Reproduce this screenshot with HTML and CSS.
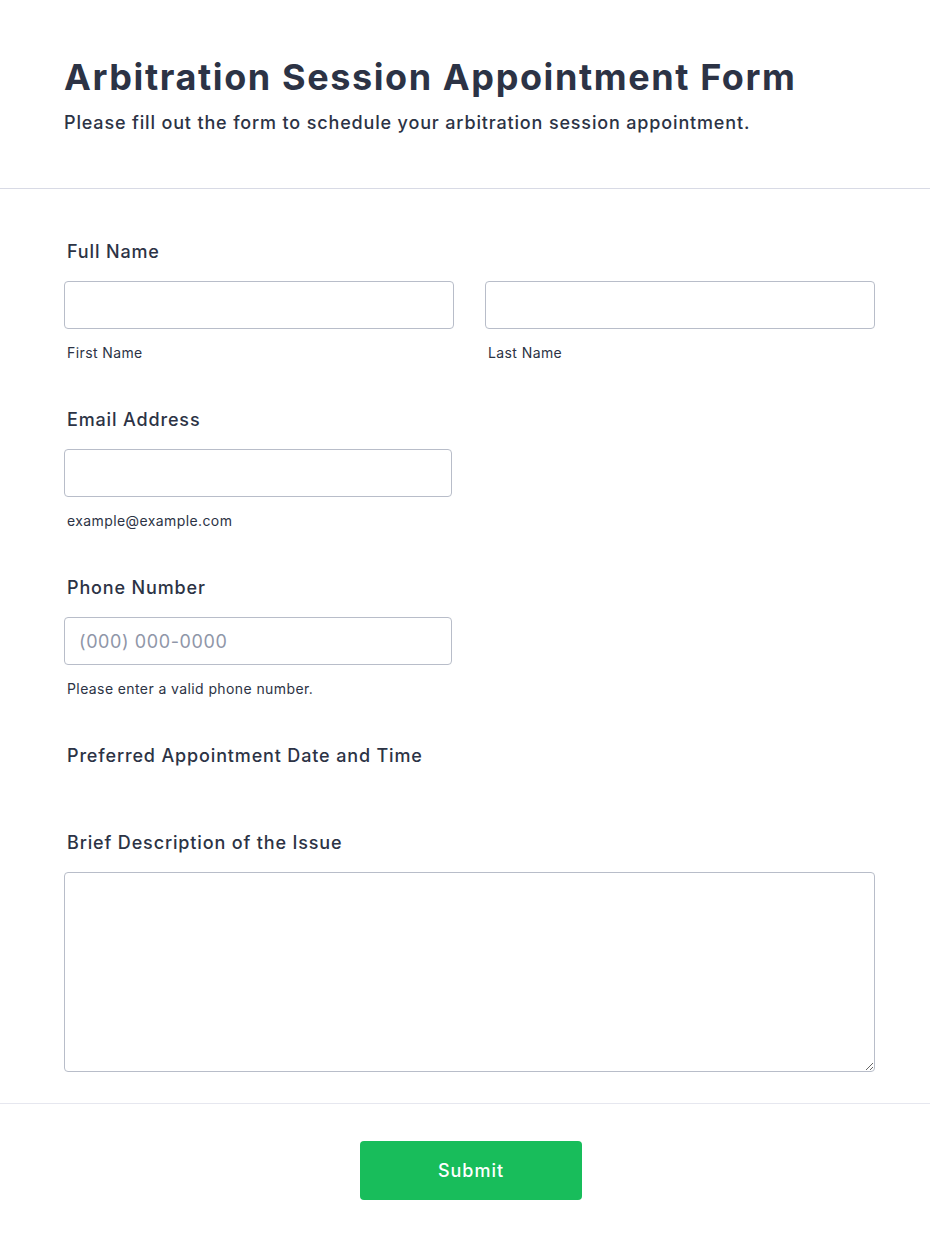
FILE: index.html
```html
<!DOCTYPE html>
<html>

<head>
    <meta charset="UTF-8">
    <title>Arbitration Session Appointment Form</title>
    <link rel="stylesheet" href="styles.css">
</head>

<body>
<div class="form-header">
    <h1>Arbitration Session Appointment Form</h1>
    <p>Please fill out the form to schedule your arbitration session appointment.</p>
</div>

<form class="form-body">
    <div class="field">
        <label class="field-label">Full Name</label>
        <div class="name-row">
            <div class="name-col">
                <input type="text" class="text-input">
                <span class="sublabel">First Name</span>
            </div>
            <div class="name-col">
                <input type="text" class="text-input">
                <span class="sublabel">Last Name</span>
            </div>
        </div>
    </div>

    <div class="field">
        <label class="field-label">Email Address</label>
        <div class="half">
            <input type="email" class="text-input">
            <span class="sublabel">example@example.com</span>
        </div>
    </div>

    <div class="field">
        <label class="field-label">Phone Number</label>
        <div class="half">
            <input type="tel" class="text-input" placeholder="(000) 000-0000">
            <span class="sublabel">Please enter a valid phone number.</span>
        </div>
    </div>

    <div class="field field-empty">
        <label class="field-label">Preferred Appointment Date and Time</label>
    </div>

    <div class="field field-last">
        <label class="field-label">Brief Description of the Issue</label>
        <textarea class="text-area"></textarea>
    </div>
</form>

<div class="form-footer">
    <button type="button" class="submit-button">Submit</button>
</div>
</body>
</html>
```

FILE: styles.css
```css
body {
    margin: 0;
    background-color: #fff;
    font-family: Inter, "Noto Sans", sans-serif;
    color: #2c3345;
}

.form-header {
    padding: 53px 64px 51px;
    border-bottom: 1px solid #d8dae5;
}

.form-header h1 {
    margin: 0;
    font-size: 36px;
    line-height: 48px;
    font-weight: 700;
    letter-spacing: 1.6px;
}

.form-header p {
    margin: 8px 0 0;
    font-size: 18px;
    line-height: 28px;
    font-weight: 500;
    letter-spacing: 0.84px;
}

.form-body {
    padding: 51px 55px 0 64px;
}

.field {
    margin-bottom: 45px;
}

.field-empty {
    margin-bottom: 63px;
}

.field-last {
    margin-bottom: 0;
}

.field-label {
    display: block;
    padding-left: 3px;
    font-size: 18px;
    line-height: 24px;
    font-weight: 500;
    letter-spacing: 0.85px;
    margin-bottom: 17px;
}

.name-row {
    display: flex;
    gap: 31px;
}

.name-col {
    flex: 1;
    display: flex;
    flex-direction: column;
}

.half {
    width: 388px;
    display: flex;
    flex-direction: column;
}

.text-input {
    box-sizing: border-box;
    width: 100%;
    height: 48px;
    padding: 0 14px;
    border: 1px solid #b8bdc9;
    border-radius: 4px;
    font-family: inherit;
    font-size: 18px;
    letter-spacing: 0.6px;
    color: #2c3345;
}

.text-input::placeholder {
    color: #8f96a8;
}

.sublabel {
    display: block;
    padding-left: 3px;
    margin-top: 14px;
    font-size: 14px;
    line-height: 20px;
    letter-spacing: 0.4px;
}

.text-area {
    display: block;
    box-sizing: border-box;
    width: 100%;
    height: 200px;
    padding: 10px 14px;
    border: 1px solid #b8bdc9;
    border-radius: 4px;
    font-family: inherit;
    font-size: 16px;
}

.form-footer {
    margin-top: 31px;
    padding: 37px 0 50px;
    border-top: 1px solid #e6e7ef;
    display: flex;
    justify-content: center;
}

.submit-button {
    width: 222px;
    height: 59px;
    margin-left: 12px;
    border: none;
    border-radius: 4px;
    background-color: #18bd5b;
    color: #fff;
    font-family: inherit;
    font-size: 18px;
    font-weight: 500;
    letter-spacing: 1px;
    cursor: pointer;
}
```
